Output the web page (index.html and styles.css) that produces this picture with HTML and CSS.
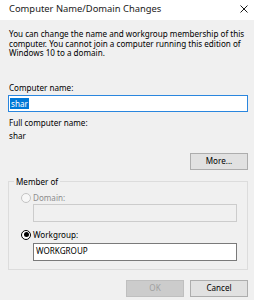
FILE: index.html
```html
<!DOCTYPE html>
<html>
<head>
<meta charset="utf-8">
<link rel="stylesheet" href="styles.css">
</head>
<body>
<div class="dialog">
  <div class="titlebar">
    <span class="title">Computer Name/Domain Changes</span>
    <svg class="close" width="8" height="8" viewBox="0 0 8 8"><path d="M0.5 0.5L7.5 7.5M7.5 0.5L0.5 7.5" stroke="#000" stroke-width="0.9" fill="none"/></svg>
  </div>
  <div class="content">
    <p class="intro">You can change the name and workgroup membership of this<br>computer. You cannot join a computer running this edition of<br>Windows 10 to a domain.</p>
    <div class="label label-name">Computer name:</div>
    <div class="textbox focused"><span class="sel">shar</span></div>
    <div class="label label-full">Full computer name:</div>
    <div class="label value">shar</div>
    <div class="more-row"><button class="btn">More...</button></div>
    <fieldset class="group">
      <legend>Member of</legend>
      <div class="radio-row disabled"><span class="radio"></span><span class="radio-label">Domain:</span></div>
      <div class="textbox field disabled-box"></div>
      <div class="radio-row gap"><span class="radio checked"></span><span class="radio-label">Workgroup:</span></div>
      <div class="textbox field field-wg">WORKGROUP</div>
    </fieldset>
    <div class="buttons">
      <button class="btn btn-disabled">OK</button>
      <button class="btn">Cancel</button>
    </div>
  </div>
</div>
</body>
</html>
```

FILE: styles.css
```css
* { box-sizing: border-box; }
html, body { margin: 0; padding: 0; }
body {
  width: 254px;
  height: 300px;
  overflow: hidden;
  background: #f0f0f0;
  font-family: "Noto Sans", sans-serif;
  font-size: 8.1px;
  line-height: 10px;
  color: #000;
}
.titlebar {
  height: 20px;
  background: #fff;
  display: flex;
  justify-content: space-between;
  align-items: flex-start;
  padding: 3px 6px 0 9px;
}
.title { color: #1a1a1a; font-size: 9.4px; line-height: 11px; }
.close { margin-top: 2px; }
.content { padding: 0 6px 0 8px; }
.intro { margin: 9px 0 0 1px; line-height: 9.5px; white-space: nowrap; }
.label { padding-left: 1px; }
.label-name { margin-top: 25px; }
.textbox {
  height: 17px;
  margin-top: 2px;
  border: 1px solid #7a7a7a;
  background: #fff;
  padding: 2px 1px;
  line-height: 11px;
}
.focused { border-color: #2a86de; }
.sel { display: inline-block; background: #0078d7; color: #fff; padding: 0 1px; }
.label-full { margin-top: 6px; }
.value { margin-top: 3px; }
.more-row { display: flex; justify-content: flex-end; margin-top: 12px; }
.btn {
  width: 58px;
  height: 17px;
  padding: 0;
  border: 1px solid #adadad;
  background: #e1e1e1;
  font: inherit;
  line-height: 14px;
  color: #000;
}
.btn-disabled { background: #cccccc; border-color: #bfbfbf; color: #a0a0a0; }
.group {
  margin: 7px 0 0;
  padding: 6px 10px 8px 5px;
  border: 1px solid #dcdcdc;
  min-width: 0;
}
.group legend { padding: 0 2px; line-height: 10px; }
.radio-row { display: flex; align-items: center; height: 10px; margin-left: 7px; }
.radio-row.gap { margin-top: 8px; }
.radio {
  width: 10px;
  height: 10px;
  border: 1px solid #333;
  border-radius: 50%;
  background: #fff;
  position: relative;
}
.disabled .radio { border-color: #c3c3c3; background: #f7f7f7; }
.disabled .radio-label { color: #8d8d8d; }
.radio.checked { border-color: #000; }
.radio.checked::after {
  content: "";
  position: absolute;
  left: 1.5px; top: 1.5px;
  width: 5px; height: 5px;
  border-radius: 50%;
  background: #000;
}
.radio-label { margin-left: 2px; }
.field { margin-left: 19px; height: 18px; }
.disabled-box { margin-top: 1px; background: #f0f0f0; border-color: #cccccc; }
.field-wg { margin-top: 3px; padding: 2px 2px; line-height: 10px; }
.buttons { display: flex; justify-content: flex-end; gap: 6px; margin-top: 10px; }
```
